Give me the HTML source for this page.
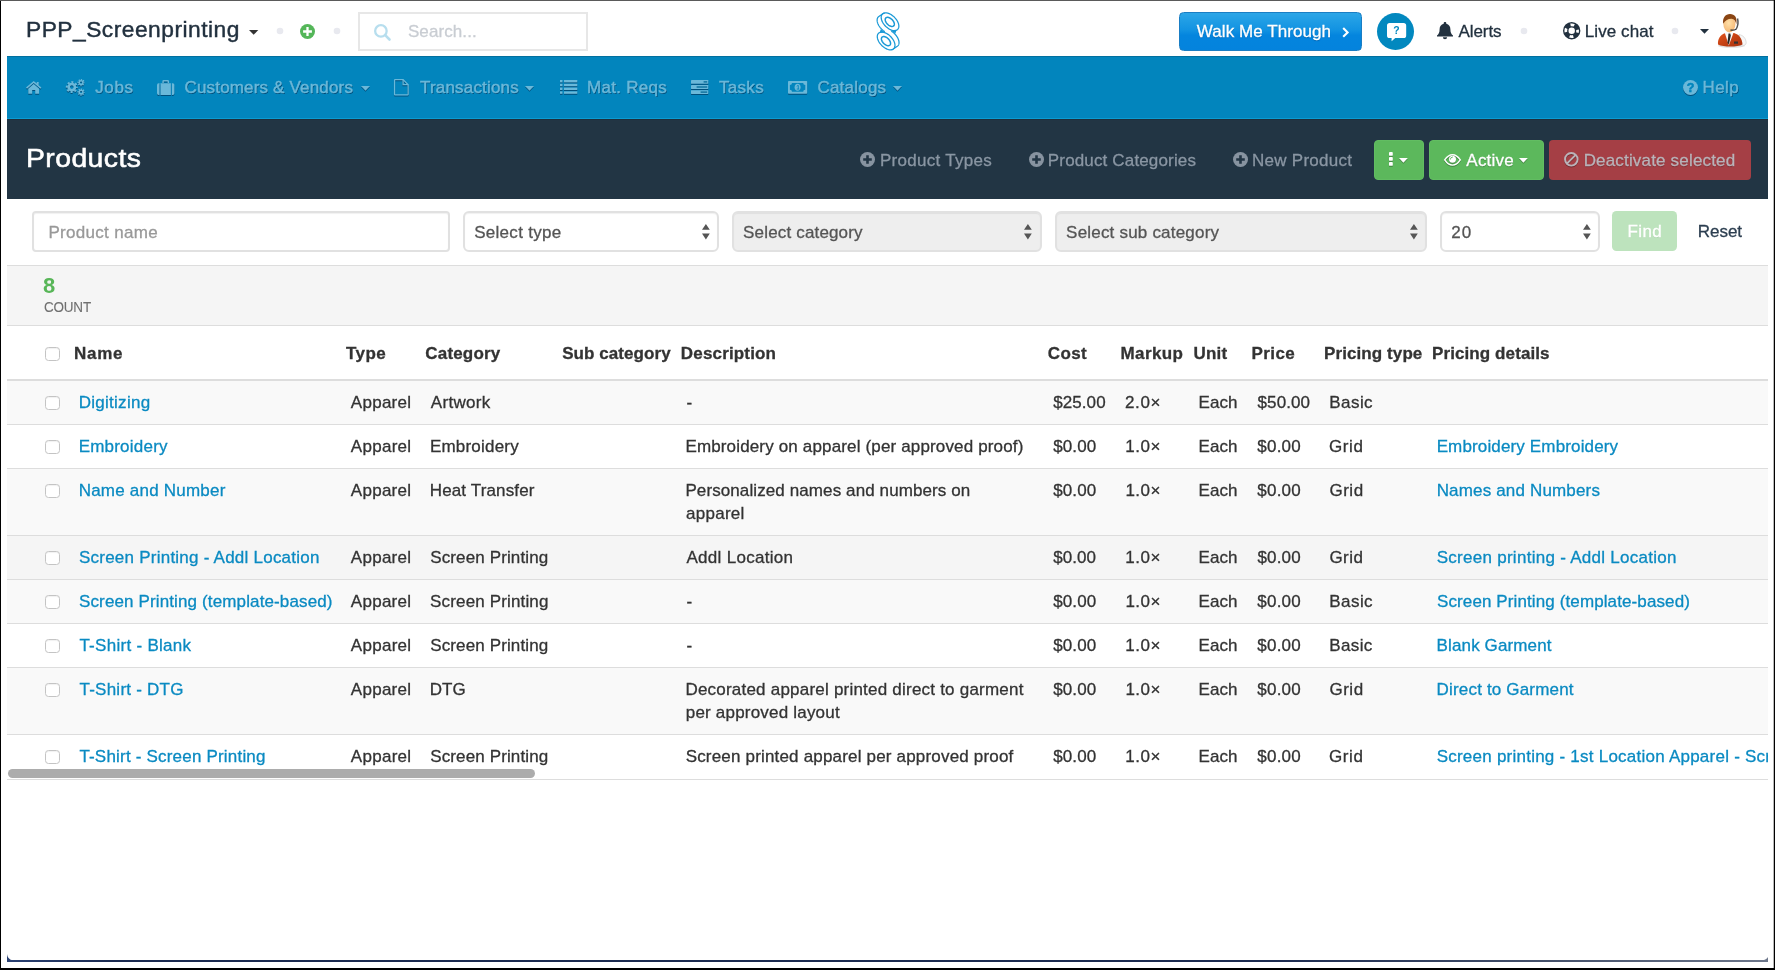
<!DOCTYPE html>
<html>
<head>
<meta charset="utf-8">
<title>Products</title>
<style>
*{box-sizing:border-box;margin:0;padding:0}
html{width:1775px;height:970px;overflow:hidden;background:#fff}
body{width:1775px;height:970px;overflow:hidden;background:#fff;opacity:.9999}
body{position:relative;font-family:"Liberation Sans",sans-serif;font-size:17px;color:#333;-webkit-text-stroke:0.3px;letter-spacing:0.09px}
.a{position:absolute;white-space:nowrap}
.t{position:absolute;white-space:nowrap;line-height:23px;height:23px}
svg{position:absolute;overflow:visible}
#bl{left:0;top:0;width:1px;height:970px;background:#000}
#bt{left:0;top:0;width:1775px;height:1px;background:#5a5a5a}
#br{left:1773px;top:0;width:2px;height:970px;background:linear-gradient(90deg,rgba(0,0,0,.28) 50%,#000 50%)}
#bb{left:0;top:968px;width:1775px;height:2px;background:#000}
#title{left:26px;top:16.2px;font-size:21.5px;line-height:28px;color:#22313f;letter-spacing:.45px;transform:scaleX(1.06);transform-origin:0 0;-webkit-text-stroke:.4px}
.dot{width:6.6px;height:6.6px;border-radius:50%;background:#e6e7ee}
#search{left:358px;top:12px;width:230px;height:39px;border:2px solid #e7e7e7;background:#fff}
#wmt{left:1179px;top:11.5px;width:182.5px;height:39.1px;border-radius:4.5px;border:1px solid #1a7ec4;background:linear-gradient(#2ca6e7,#1293e2 45%,#0485de 60%,#0483dd)}
.wm{color:#fff;text-shadow:0 1px 1px rgba(0,60,120,.45)}
#qc{left:1377.2px;top:12.8px;width:37px;height:37px;border-radius:50%;background:#0288bf}
.hd{color:#22313f}
#nav{left:7px;top:55.5px;width:1760.5px;height:63.5px;background:#0285bd;border-top:1.5px solid #02709f;border-bottom:1.5px solid #0a9bd2}
.nv{color:#6ab8d9;-webkit-text-stroke:0.45px;text-shadow:.7px 1.3px .4px rgba(0,55,95,.75)}
.ni{filter:drop-shadow(.7px 1.3px .3px rgba(0,55,95,.7))}
#bar{left:7px;top:119px;width:1760.5px;height:79.5px;background:#223544;border-top:1px solid #1e2f3c}
#ptitle{left:25.5px;top:140.7px;font-size:26.5px;line-height:34px;color:#fff;letter-spacing:.4px;transform:scaleX(1.07);transform-origin:0 0;-webkit-text-stroke:.55px}
.bl{color:#8a96a3}
.btn{border-radius:4px;height:40.6px;top:139.9px}
.gr{background:#5cb85c;border:1px solid #62bd62}
.rd{background:#a53f45}
.bt{color:#fff;text-shadow:0 1px 1px rgba(0,0,0,.3)}
.bs{filter:drop-shadow(0 1px .4px rgba(0,0,0,.3))}
#pname{left:32.2px;top:211.3px;width:417.5px;height:41px;border:2px solid #e1e1e1;border-radius:4px;background:#fff;box-shadow:inset 0 1px 1px rgba(0,0,0,.06)}
.sel{top:211.3px;height:41px;border:2px solid #e1e1e1;border-radius:6px;box-shadow:inset 0 1px 1px rgba(0,0,0,.06)}
#find{left:1612.3px;top:211.1px;width:64.6px;height:40.1px;border-radius:4.5px;background:#bde3bd}
#count{left:7px;top:265px;width:1760.5px;height:61px;background:#f5f5f5;border-top:1px solid #ddd;border-bottom:1px solid #ddd}
#tbl{left:0;top:0;width:1767.5px;height:790px;overflow:hidden}
.th{font-weight:bold;color:#333}
.lk{color:#0a8ac2}
.cb{width:14.6px;height:14.6px;border:1px solid #c4c4c4;border-radius:3.5px;background:#fff;box-shadow:inset 0 1px 1px rgba(0,0,0,.06)}
#sb{left:8px;top:768.8px;width:526.5px;height:9.4px;border-radius:5px;background:#acacac}
#foot{left:7px;top:959.5px;width:1760.5px;height:2.5px;background:linear-gradient(90deg,#2a4173,#1b2a50 6%,#1c2b50 72%,#46526c 88%,#6d778b)}
</style>
</head>
<body>
<div class="a" id="title">PPP_Screenprinting</div>
<svg style="left:248.7px;top:30px" width="9.3" height="4.8" viewBox="0 0 9.3 4.8"><path d="M0 0h9.3L4.65 4.8z" fill="#333"/></svg>
<svg style="left:275.5px;top:26.5px" width="8" height="8" viewBox="0 0 8 8"><circle cx="4" cy="4" r="3.3" fill="#e8e9ef"/></svg>
<svg style="left:300.2px;top:23.5px" width="15" height="15" viewBox="0 0 15 15"><circle cx="7.5" cy="7.5" r="7.5" fill="#54b659"/><path d="M6.350 3.100h2.300v3.250h3.250v2.300H8.650v3.250H6.350V8.650H3.100V6.350h3.250z" fill="#fff"/></svg>
<svg style="left:332.7px;top:26.5px" width="8" height="8" viewBox="0 0 8 8"><circle cx="4" cy="4" r="3.3" fill="#e8e9ef"/></svg>
<div class="a" id="search"></div>
<svg style="left:374.2px;top:23.8px" width="17" height="17" viewBox="0 0 17 17"><circle cx="6.9" cy="6.9" r="5.750" fill="none" stroke="#b7deee" stroke-width="2.300"/><path d="M11.200 11.200l4.300 4.300" stroke="#b7deee" stroke-width="2.600" stroke-linecap="round"/></svg>
<div id="x-search" class="t" style="left:407.92px;top:19.9px;letter-spacing:0.099px;color:#c9cdd3">Search...</div>
<svg id="logo" style="left:870px;top:8px" width="36" height="46" viewBox="0 0 36 46"><g fill="none" stroke="#1b9ad7" stroke-width="1.25" stroke-linejoin="round" stroke-linecap="round"><path d="M14.41 23.32 L13.97 23.02 L13.54 22.71 L13.11 22.38 L12.69 22.04 L12.28 21.68 L11.88 21.31 L11.49 20.93 L11.11 20.54 L10.74 20.13 L10.38 19.72 L10.04 19.30 L9.72 18.87 L9.41 18.43 L9.12 17.99 L8.85 17.55 L8.59 17.10 L8.35 16.66 L8.14 16.21 L7.94 15.76 L7.76 15.32 L7.61 14.87 L7.47 14.44 L7.36 14.00 L7.27 13.58 L7.20 13.16 L7.16 12.75 L7.14 12.35 L7.14 11.96 L7.16 11.58 L7.20 11.21 L7.27 10.86 L7.36 10.52 L7.47 10.20 L7.61 9.89 L7.76 9.60 L7.94 9.33 L8.14 9.08 L8.35 8.84 L8.59 8.63 L8.85 8.44 L12.88 5.68 L13.21 5.48 L13.57 5.30 L13.95 5.16 L14.36 5.04"/><path d="M21.74 23.41 L22.18 23.71 L22.61 24.02 L23.04 24.34 L23.46 24.69 L23.87 25.04 L24.27 25.41 L24.66 25.80 L25.04 26.19 L25.41 26.59 L25.76 27.01 L26.10 27.43 L26.43 27.86 L26.74 28.29 L27.03 28.73 L27.30 29.18 L27.56 29.62 L27.79 30.07 L28.01 30.52 L28.21 30.97 L28.39 31.41 L28.54 31.85 L28.67 32.29 L28.79 32.72 L28.88 33.15 L28.94 33.57 L28.99 33.98 L29.01 34.38 L29.01 34.77 L28.99 35.15 L28.94 35.52 L28.88 35.87 L28.79 36.20 L28.67 36.53 L28.54 36.83 L28.38 37.12 L28.21 37.39 L28.01 37.65 L27.79 37.88 L27.56 38.10 L27.30 38.29 L23.27 41.04 L22.94 41.25 L22.58 41.43 L22.20 41.57 L21.79 41.68"/><path d="M27.67 21.41 L26.87 22.01 L25.91 22.41 L24.81 22.60 L23.58 22.57 L22.27 22.32 L20.91 21.86 L19.52 21.20 L18.14 20.36 L16.81 19.36 L15.56 18.22 L14.42 16.97 L13.41 15.64 L12.57 14.26 L11.91 12.87 L11.46 11.50 L11.21 10.19 L11.18 8.97 L11.37 7.86 L11.77 6.90 L12.37 6.11 L13.16 5.51 L14.12 5.10 L15.23 4.92 L16.45 4.95 L17.77 5.19 L19.13 5.65 L20.52 6.31 L21.90 7.15 L23.23 8.15 L24.48 9.30 L25.62 10.55 L26.63 11.88 L27.47 13.25 L28.12 14.64 L28.58 16.01 L28.83 17.32 L28.86 18.55 L28.67 19.65 L28.27 20.61 L27.67 21.41Z"/><path d="M23.78 40.62 L22.98 41.22 L22.02 41.62 L20.92 41.81 L19.69 41.78 L18.38 41.53 L17.02 41.07 L15.63 40.42 L14.25 39.58 L12.92 38.57 L11.67 37.43 L10.53 36.18 L9.52 34.85 L8.68 33.47 L8.02 32.08 L7.57 30.72 L7.32 29.40 L7.29 28.18 L7.48 27.07 L7.88 26.11 L8.48 25.32 L9.27 24.72 L10.23 24.32 L11.34 24.13 L12.56 24.16 L13.88 24.41 L15.24 24.86 L16.63 25.52 L18.01 26.36 L19.34 27.37 L20.59 28.51 L21.73 29.76 L22.74 31.09 L23.58 32.47 L24.23 33.86 L24.69 35.22 L24.94 36.53 L24.97 37.76 L24.78 38.86 L24.38 39.83 L23.78 40.62Z"/><path stroke-width="1.5" d="M23.74 17.86 L23.33 18.17 L22.84 18.37 L22.27 18.46 L21.64 18.44 L20.97 18.31 L20.26 18.07 L19.55 17.73 L18.84 17.29 L18.15 16.77 L17.50 16.18 L16.91 15.53 L16.39 14.85 L15.95 14.13 L15.61 13.42 L15.37 12.71 L15.24 12.04 L15.22 11.41 L15.31 10.84 L15.52 10.35 L15.82 9.94 L16.23 9.63 L16.72 9.43 L17.29 9.34 L17.92 9.36 L18.60 9.49 L19.30 9.73 L20.02 10.07 L20.73 10.51 L21.42 11.03 L22.06 11.62 L22.65 12.27 L23.17 12.95 L23.61 13.66 L23.95 14.38 L24.19 15.09 L24.32 15.76 L24.34 16.39 L24.25 16.96 L24.05 17.45 L23.74 17.86Z"/><path stroke-width="1.5" d="M19.94 37.07 L19.54 37.38 L19.05 37.58 L18.48 37.67 L17.85 37.65 L17.17 37.52 L16.47 37.28 L15.75 36.94 L15.04 36.50 L14.35 35.98 L13.71 35.39 L13.11 34.75 L12.59 34.06 L12.16 33.35 L11.81 32.63 L11.57 31.93 L11.44 31.25 L11.42 30.62 L11.52 30.05 L11.72 29.56 L12.03 29.15 L12.43 28.85 L12.93 28.64 L13.50 28.55 L14.13 28.57 L14.80 28.70 L15.51 28.94 L16.22 29.28 L16.93 29.72 L17.62 30.24 L18.27 30.83 L18.86 31.48 L19.38 32.17 L19.82 32.88 L20.16 33.59 L20.40 34.30 L20.53 34.97 L20.55 35.60 L20.46 36.17 L20.25 36.66 L19.94 37.07Z"/></g><path d="M10.72 21.25 L15.28 24.29 L12.43 24.76 L9.49 24.95Z" fill="#1b9ad7"/><path d="M25.43 25.47 L20.87 22.44 L23.72 21.96 L26.66 21.77Z" fill="#1b9ad7"/></svg>
<div class="a" id="wmt"></div><div id="x-wmt" class="t wm" style="left:1196.83px;top:20.0px;letter-spacing:0.063px;">Walk Me Through</div>
<svg style="left:1341.5px;top:27px" width="7" height="11" viewBox="0 0 7 11"><path d="M1.2 1l4.400 4.400L1.200 9.800" fill="none" stroke="#fff" stroke-width="2.100"/></svg>
<div class="a" id="qc"></div>
<svg style="left:1387px;top:22.8px" width="19.2" height="18.5" viewBox="0 0 19.2 18.5"><path d="M2.600 0h14a2.600 2.600 0 0 1 2.600 2.600v9.800a2.600 2.600 0 0 1-2.600 2.600H8.300L4.600 18.200V15H2.600a2.600 2.600 0 0 1-2.600-2.600V2.600a2.600 2.600 0 0 1 2.600-2.600z" fill="#fff"/><text x="9.500" y="11.400" font-family="Liberation Sans" font-weight="bold" font-size="10.500" text-anchor="middle" fill="#0288bf" stroke="none">?</text></svg>
<svg style="left:1436.6px;top:22.3px" width="16" height="17.5" viewBox="0 0 16 17.5"><path d="M8 0c.75 0 1.300.55 1.300 1.250v.5c2.600.6 4.100 2.800 4.100 5.450 0 3.300.9 4.900 2.600 6.200v1H0v-1c1.700-1.300 2.600-2.900 2.600-6.200 0-2.650 1.500-4.850 4.100-5.450v-.5C6.700.55 7.250 0 8 0zM5.900 15.200h4.200a2.100 2.100 0 0 1-4.200 0z" fill="#22313f"/></svg>
<div id="x-alerts" class="t hd" style="left:1458.40px;top:19.7px;letter-spacing:-0.050px;">Alerts</div>
<svg style="left:1519.7px;top:26.5px" width="8" height="8" viewBox="0 0 8 8"><circle cx="4" cy="4" r="3.3" fill="#e8e9ef"/></svg>
<svg style="left:1562.6px;top:22.2px" width="17.4" height="17.4" viewBox="0 0 17.4 17.4"><circle cx="8.7" cy="8.7" r="5.950" fill="none" stroke="#22313f" stroke-width="5.500"/><circle cx="8.700" cy="8.700" r="5.900" fill="none" stroke="#fff" stroke-width="2.700" stroke-dasharray="3.900 5.368" stroke-dashoffset="1.950"/></svg>
<div id="x-live" class="t hd" style="left:1584.84px;top:19.7px;letter-spacing:0.069px;">Live chat</div>
<svg style="left:1671.2px;top:26.5px" width="8" height="8" viewBox="0 0 8 8"><circle cx="4" cy="4" r="3.3" fill="#e8e9ef"/></svg>
<svg style="left:1699.6px;top:28.8px" width="9" height="4.8" viewBox="0 0 9 4.8"><path d="M0 0h9L4.5 4.8z" fill="#22313f"/></svg>
<svg id="avatar" style="left:1717px;top:13.5px" width="30" height="34" viewBox="0 0 30 34">
<defs><linearGradient id="vg" x1="0" y1="0" x2="1" y2="1"><stop offset="0" stop-color="#e2531c"/><stop offset="1" stop-color="#a8300c"/></linearGradient>
<radialGradient id="fg" cx=".45" cy=".4" r=".7"><stop offset="0" stop-color="#ffe0a8"/><stop offset="1" stop-color="#f3b26e"/></radialGradient></defs>
<ellipse cx="14.5" cy="31.8" rx="13.5" ry="2" fill="#000" opacity=".13"/>
<path d="M22 20.500c4 .8 6.900 3.400 7.200 8.400.1 1.800-2.200 2.900-5 3.100z" fill="#f7f7f7" stroke="#c9c9c9" stroke-width=".6"/>
<path d="M1 30.500c-.5-5.500 2-9.500 7.500-11.500h8.500c5 1.500 8 5 8.500 11.500-3 1.500-7 2-12 2s-9.500-.5-12.500-2z" fill="url(#vg)"/>
<path d="M7.900 19l4.100-2.200 4.400 2.200-4.600 12.400z" fill="#fafafa"/>
<path d="M11.500 19.500h1.800l.5 2.300-2 9-1.300-2.300z" fill="#2a2a2a"/>
<rect x="17" y="27.500" width="4" height="2.200" fill="#333"/>
<ellipse cx="12.400" cy="10.600" rx="6" ry="7.800" fill="url(#fg)"/>
<path d="M6.200 9.800C5.300 4 8.300 0 13 0c4.800 0 7.400 3.400 6.300 10.500-.6-3.300-2-5.600-4.700-5.700-3.400-.1-6.200 1.300-8.400 5z" fill="#8a4513"/>
<path d="M20.500 4.500c1 3.500.2 8-1.500 11" fill="none" stroke="#555" stroke-width="1.500"/>
<path d="M19 15.200c-1.500 1-3.500 1.200-5.500.8" fill="none" stroke="#333" stroke-width="1.300"/>
</svg>
<div class="a" id="nav"></div>
<svg class="ni" style="left:26px;top:81.2px" width="15.4" height="12.8" viewBox="0 0 15.4 12.8"><path d="M7.7 0L0 6.500l1 1.150L7.700 2l6.700 5.650 1-1.150L12.700 4.200V.9h-1.900v1.700z" fill="#6ab8d9"/><path d="M7.700 3.100L2.300 7.650V12.800h3.900V9h3v3.800h3.900V7.650z" fill="#6ab8d9"/></svg>
<svg class="ni" style="left:66px;top:79px" width="18.6" height="17.2" viewBox="0 0 18.6 17.2"><circle cx="5.8" cy="8.1" r="3.12" fill="none" stroke="#6ab8d9" stroke-width="2.65"/><circle cx="5.8" cy="8.1" r="5.00" fill="none" stroke="#6ab8d9" stroke-width="2.00" stroke-dasharray="2.041 1.884" stroke-dashoffset="1.021"/><circle cx="15.1" cy="3.6" r="1.88" fill="none" stroke="#6ab8d9" stroke-width="1.56"/><circle cx="15.1" cy="3.6" r="2.93" fill="none" stroke="#6ab8d9" stroke-width="1.44" stroke-dasharray="1.197 1.105" stroke-dashoffset="0.598"/><circle cx="15.1" cy="13.1" r="1.88" fill="none" stroke="#6ab8d9" stroke-width="1.56"/><circle cx="15.1" cy="13.1" r="2.93" fill="none" stroke="#6ab8d9" stroke-width="1.44" stroke-dasharray="1.197 1.105" stroke-dashoffset="0.598"/></svg>
<div id="x-jobs" class="t nv" style="left:95.23px;top:76.3px;letter-spacing:0.647px;">Jobs</div>
<svg class="ni" style="left:157.1px;top:80.1px" width="17.4" height="14.9" viewBox="0 0 17.4 14.9"><path d="M5.300 3.300V1.500A1.500 1.500 0 0 1 6.800 0h3.800a1.500 1.500 0 0 1 1.500 1.500v1.800h-1.500V1.500H6.800v1.800z" fill="#6ab8d9"/><path d="M0 4.900a1.600 1.600 0 0 1 1.600-1.600h.9v11.600h-.9A1.600 1.600 0 0 1 0 13.300zM3.500 3.300h10.400v11.600H3.500zM14.900 3.300h.9a1.600 1.600 0 0 1 1.600 1.600v8.400a1.600 1.600 0 0 1-1.600 1.600h-.9z" fill="#6ab8d9"/></svg>
<div id="x-cust" class="t nv" style="left:184.52px;top:76.3px;letter-spacing:0.170px;">Customers &amp; Vendors</div>
<svg class="ni" style="left:360.5px;top:86.2px" width="9" height="4.7" viewBox="0 0 9 4.7"><path d="M0 0h9L4.5 4.7z" fill="#6ab8d9"/></svg>
<svg class="ni" style="left:394.2px;top:79.4px" width="14.8" height="16.5" viewBox="0 0 14.8 16.5"><path d="M1.100.65h8l5.050 5.050v9.600a.55.55 0 0 1-.55.550H1.100a.55.55 0 0 1-.55-.550V1.200A.55.55 0 0 1 1.100.65z" fill="none" stroke="#6ab8d9" stroke-width="1.250"/><path d="M9.100.65v5.050h5.050" fill="none" stroke="#6ab8d9" stroke-width="1.250"/></svg>
<div id="x-trans" class="t nv" style="left:420.06px;top:76.3px;letter-spacing:0.176px;">Transactions</div>
<svg class="ni" style="left:525.2px;top:86.2px" width="9" height="4.7" viewBox="0 0 9 4.7"><path d="M0 0h9L4.5 4.7z" fill="#6ab8d9"/></svg>
<svg class="ni" style="left:559.6px;top:80.1px" width="17.3" height="13.8" viewBox="0 0 17.3 13.8"><rect x="0" y="0.00" width="2.5" height="2.4" fill="#6ab8d9"/><rect x="3.9" y="0.00" width="13.4" height="2.4" fill="#6ab8d9"/><rect x="0" y="3.80" width="2.5" height="2.4" fill="#6ab8d9"/><rect x="3.9" y="3.80" width="13.4" height="2.4" fill="#6ab8d9"/><rect x="0" y="7.60" width="2.5" height="2.4" fill="#6ab8d9"/><rect x="3.9" y="7.60" width="13.4" height="2.4" fill="#6ab8d9"/><rect x="0" y="11.40" width="2.5" height="2.4" fill="#6ab8d9"/><rect x="3.9" y="11.40" width="13.4" height="2.4" fill="#6ab8d9"/></svg>
<div id="x-mat" class="t nv" style="left:587.12px;top:76.3px;letter-spacing:0.269px;">Mat. Reqs</div>
<svg class="ni" style="left:690.8px;top:80.1px" width="17.3" height="14" viewBox="0 0 17.3 14"><rect x="0" y="0.00" width="17.3" height="3.8" rx=".4" fill="#6ab8d9"/><rect x="12.6" y="1.20" width="3.6" height="1.4" fill="#0b6f9c"/><rect x="0" y="5.10" width="17.3" height="3.8" rx=".4" fill="#6ab8d9"/><rect x="5.6" y="6.30" width="10.6" height="1.4" fill="#0b6f9c"/><rect x="0" y="10.20" width="17.3" height="3.8" rx=".4" fill="#6ab8d9"/><rect x="9.6" y="11.40" width="6.6" height="1.4" fill="#0b6f9c"/></svg>
<div id="x-tasks" class="t nv" style="left:719.10px;top:76.3px;letter-spacing:0.271px;">Tasks</div>
<svg class="ni" style="left:788.2px;top:81.4px" width="19.2" height="12.7" viewBox="0 0 19.2 12.7"><rect width="19.2" height="12.7" rx=".7" fill="#6ab8d9"/><path d="M4 1.9H15.2A2.100 2.100 0 0 0 17.300 4V8.700A2.100 2.100 0 0 0 15.200 10.800H4A2.100 2.100 0 0 0 1.900 8.700V4A2.100 2.100 0 0 0 4 1.900Z" fill="#0285bd"/><ellipse cx="9.6" cy="6.35" rx="3" ry="3.5" fill="#6ab8d9"/><path d="M8.800 5.300l1-.8h.5v3.500M8.800 8.100h2.400" stroke="#0285bd" stroke-width=".9" fill="none"/></svg>
<div id="x-cat" class="t nv" style="left:817.40px;top:76.3px;letter-spacing:0.234px;">Catalogs</div>
<svg class="ni" style="left:893.2px;top:86.2px" width="9" height="4.7" viewBox="0 0 9 4.7"><path d="M0 0h9L4.5 4.7z" fill="#6ab8d9"/></svg>
<svg class="ni" style="left:1683.3px;top:80px" width="15" height="15" viewBox="0 0 15 15"><circle cx="7.5" cy="7.5" r="7.5" fill="#6ab8d9"/><text x="7.5" y="12" font-family="Liberation Sans" font-weight="bold" font-size="12.5" text-anchor="middle" fill="#0285bd" stroke="#0285bd" stroke-width=".5">?</text></svg>
<div id="x-help" class="t nv" style="left:1702.43px;top:76.3px;letter-spacing:0.451px;">Help</div>
<div class="a" id="bar"></div>
<div class="a" id="ptitle">Products</div>
<svg style="left:860.4px;top:152.1px" width="15" height="15" viewBox="0 0 15 15"><circle cx="7.5" cy="7.5" r="7.5" fill="#8793a0"/><path d="M6.200 3.200h2.600v3h3v2.600h-3v3H6.200v-3h-3V6.200h3z" fill="#223544"/></svg>
<div id="x-ptypes" class="t bl" style="left:879.88px;top:148.5px;letter-spacing:0.297px;">Product Types</div>
<svg style="left:1028.5px;top:152.1px" width="15" height="15" viewBox="0 0 15 15"><circle cx="7.5" cy="7.5" r="7.5" fill="#8793a0"/><path d="M6.200 3.200h2.600v3h3v2.600h-3v3H6.200v-3h-3V6.200h3z" fill="#223544"/></svg>
<div id="x-pcats" class="t bl" style="left:1047.83px;top:148.5px;letter-spacing:0.151px;">Product Categories</div>
<svg style="left:1233px;top:152.1px" width="15" height="15" viewBox="0 0 15 15"><circle cx="7.5" cy="7.5" r="7.5" fill="#8793a0"/><path d="M6.200 3.200h2.600v3h3v2.600h-3v3H6.200v-3h-3V6.200h3z" fill="#223544"/></svg>
<div id="x-newp" class="t bl" style="left:1252.05px;top:148.5px;letter-spacing:0.264px;">New Product</div>
<div class="a btn gr" style="left:1374.1px;width:49.7px"></div>
<div class="a btn gr" style="left:1428.9px;width:114.7px"></div>
<div class="a btn rd" style="left:1549px;width:201.5px"></div>
<svg class="bs" style="left:1389.3px;top:152.3px" width="3.8" height="13.8" viewBox="0 0 3.8 13.8"><rect width="3.8" height="3.8" rx=".9" fill="#fff"/><rect y="5" width="3.8" height="3.8" rx=".9" fill="#fff"/><rect y="10" width="3.8" height="3.8" rx=".9" fill="#fff"/></svg>
<svg class="bs" style="left:1398.9px;top:158.1px" width="8.8" height="4.8" viewBox="0 0 8.8 4.8"><path d="M0 0h8.8L4.4 4.8z" fill="#fff"/></svg>
<svg class="bs" style="left:1444.2px;top:154.2px" width="17" height="11.8" viewBox="0 0 17 11.8"><path d="M.7 5.900C3.100 2.300 5.700.7 8.500.7s5.400 1.600 7.800 5.200c-2.400 3.600-5 5.200-7.800 5.200S3.100 9.500.7 5.900z" fill="none" stroke="#fff" stroke-width="1.400"/><circle cx="8.500" cy="5.300" r="3.500" fill="#fff"/><path d="M6.300 5.200a2.300 2.300 0 0 1 2.200-2.200" fill="none" stroke="#5cb85c" stroke-width=".9" stroke-linecap="round"/></svg>
<div id="x-active" class="t bt" style="left:1466.34px;top:148.5px;letter-spacing:0.211px;">Active</div>
<svg class="bs" style="left:1518.6px;top:158.1px" width="8.8" height="4.8" viewBox="0 0 8.8 4.8"><path d="M0 0h8.8L4.4 4.8z" fill="#fff"/></svg>
<svg class="bs" style="left:1564.4px;top:152.2px" width="14.6" height="14.6" viewBox="0 0 14.6 14.6"><circle cx="7.3" cy="7.3" r="6.3" fill="none" stroke="#bab3b9" stroke-width="1.9"/><path d="M2.900 11.700l8.800-8.800" stroke="#bab3b9" stroke-width="1.900"/></svg>
<div id="x-deact" class="t bt" style="left:1583.63px;top:148.5px;letter-spacing:0.177px;color:#bab3b9">Deactivate selected</div>
<div class="a" id="pname"></div><div id="x-pname" class="t" style="left:48.39px;top:220.5px;letter-spacing:0.311px;color:#999">Product name</div>
<div class="a sel" style="left:462.7px;width:256.2px;background:#fff"></div><div id="x-stype" class="t" style="left:474.19px;top:220.5px;letter-spacing:0.289px;color:#555">Select type</div><svg style="left:701.7px;top:224.2px" width="7.8" height="15.4" viewBox="0 0 7.8 15.4"><path d="M0 5.800L3.900 0l3.900 5.800zM0 9.400h7.800L3.900 15.400z" fill="#555"/></svg>
<div class="a sel" style="left:731.8px;width:309.8px;background:#eee"></div><div id="x-scat" class="t" style="left:743.10px;top:220.5px;letter-spacing:0.164px;color:#555">Select category</div><svg style="left:1024.4px;top:224.2px" width="7.8" height="15.4" viewBox="0 0 7.8 15.4"><path d="M0 5.800L3.900 0l3.900 5.800zM0 9.400h7.800L3.900 15.400z" fill="#555"/></svg>
<div class="a sel" style="left:1054.6px;width:372.7px;background:#eee"></div><div id="x-ssub" class="t" style="left:1066.10px;top:220.5px;letter-spacing:0.200px;color:#555">Select sub category</div><svg style="left:1410.1px;top:224.2px" width="7.8" height="15.4" viewBox="0 0 7.8 15.4"><path d="M0 5.800L3.900 0l3.900 5.800zM0 9.400h7.800L3.900 15.400z" fill="#555"/></svg>
<div class="a sel" style="left:1439.7px;width:160.2px;background:#fff"></div><div id="x-s20" class="t" style="left:1451.18px;top:220.5px;letter-spacing:1.055px;color:#555">20</div><svg style="left:1582.7px;top:224.2px" width="7.8" height="15.4" viewBox="0 0 7.8 15.4"><path d="M0 5.800L3.900 0l3.900 5.800zM0 9.400h7.800L3.900 15.400z" fill="#555"/></svg>
<div class="a" id="find"></div><div id="x-find" class="t" style="left:1627.39px;top:220.1px;letter-spacing:0.459px;color:#fff;text-shadow:0 1px 0 rgba(0,0,0,.06)">Find</div>
<div id="x-reset" class="t" style="left:1697.71px;top:219.8px;letter-spacing:-0.011px;color:#2c3e50">Reset</div>
<div class="a" id="count"></div><div id="x-c8" class="t" style="left:42.96px;top:274.1px;color:#58b658;font-weight:bold;font-size:22px;-webkit-text-stroke:0">8</div><div id="x-count" class="t" style="left:44.11px;top:296.4px;letter-spacing:-0.215px;color:#707070;font-size:14.5px;-webkit-text-stroke:0.1px;transform:scaleX(.93);transform-origin:0 0">COUNT</div>
<div class="a" id="tbl">
<div class="a" style="left:7px;top:379px;width:1760.5px;height:2px;background:#ddd"></div>
<div class="a cb" style="left:45.2px;top:346.8px"></div>
<div class="a" style="left:7px;top:381px;width:1760.5px;height:43px;background:#f9f9f9"></div>
<div class="a" style="left:7px;top:424px;width:1760.5px;height:1px;background:#ddd"></div>
<div class="a cb" style="left:45.2px;top:395.8px"></div>
<div class="a" style="left:7px;top:425px;width:1760.5px;height:43px;background:#fff"></div>
<div class="a" style="left:7px;top:468px;width:1760.5px;height:1px;background:#ddd"></div>
<div class="a cb" style="left:45.2px;top:439.8px"></div>
<div class="a" style="left:7px;top:469px;width:1760.5px;height:66px;background:#f9f9f9"></div>
<div class="a" style="left:7px;top:535px;width:1760.5px;height:1px;background:#ddd"></div>
<div class="a cb" style="left:45.2px;top:483.8px"></div>
<div class="a" style="left:7px;top:536px;width:1760.5px;height:43px;background:#f5f5f5"></div>
<div class="a" style="left:7px;top:579px;width:1760.5px;height:1px;background:#ddd"></div>
<div class="a cb" style="left:45.2px;top:550.8px"></div>
<div class="a" style="left:7px;top:580px;width:1760.5px;height:43px;background:#f9f9f9"></div>
<div class="a" style="left:7px;top:623px;width:1760.5px;height:1px;background:#ddd"></div>
<div class="a cb" style="left:45.2px;top:594.8px"></div>
<div class="a" style="left:7px;top:624px;width:1760.5px;height:43px;background:#fff"></div>
<div class="a" style="left:7px;top:667px;width:1760.5px;height:1px;background:#ddd"></div>
<div class="a cb" style="left:45.2px;top:638.8px"></div>
<div class="a" style="left:7px;top:668px;width:1760.5px;height:66px;background:#f9f9f9"></div>
<div class="a" style="left:7px;top:734px;width:1760.5px;height:1px;background:#ddd"></div>
<div class="a cb" style="left:45.2px;top:682.8px"></div>
<div class="a" style="left:7px;top:735px;width:1760.5px;height:44px;background:#fff"></div>
<div class="a" style="left:7px;top:779px;width:1760.5px;height:1px;background:#ddd"></div>
<div class="a cb" style="left:45.2px;top:749.8px"></div>
<div id="x-hname" class="t th" style="left:73.89px;top:342.0px;letter-spacing:0.799px;">Name</div>
<div id="x-htype" class="t th" style="left:346.08px;top:342.0px;letter-spacing:0.368px;">Type</div>
<div id="x-hcat" class="t th" style="left:425.37px;top:342.0px;letter-spacing:0.164px;">Category</div>
<div id="x-hsub" class="t th" style="left:562.16px;top:342.0px;letter-spacing:0.068px;">Sub category</div>
<div id="x-hdesc" class="t th" style="left:680.87px;top:342.0px;letter-spacing:0.158px;">Description</div>
<div id="x-hcost" class="t th" style="left:1047.80px;top:342.0px;letter-spacing:0.403px;">Cost</div>
<div id="x-hmark" class="t th" style="left:1120.50px;top:342.0px;letter-spacing:0.395px;">Markup</div>
<div id="x-hunit" class="t th" style="left:1193.38px;top:342.0px;letter-spacing:0.242px;">Unit</div>
<div id="x-hprice" class="t th" style="left:1251.57px;top:342.0px;letter-spacing:0.417px;">Price</div>
<div id="x-hpt" class="t th" style="left:1324.09px;top:342.0px;letter-spacing:0.085px;">Pricing type</div>
<div id="x-hpd" class="t th" style="left:1431.99px;top:342.0px;letter-spacing:0.097px;">Pricing details</div>
<div id="x-n0" class="t lk" style="left:78.63px;top:390.6px;letter-spacing:0.285px;">Digitizing</div>
<div id="x-a0" class="t" style="left:350.84px;top:390.6px;letter-spacing:0.272px;">Apparel</div>
<div id="x-c0" class="t" style="left:430.86px;top:390.6px;letter-spacing:0.290px;">Artwork</div>
<div id="x-d0_0" class="t" style="left:686.38px;top:390.6px;">-</div>
<div id="x-co0" class="t" style="left:1053.25px;top:390.6px;letter-spacing:0.067px;">$25.00</div>
<div id="x-m0" class="t" style="left:1125.05px;top:390.6px;letter-spacing:0.584px;">2.0×</div>
<div id="x-u0" class="t" style="left:1198.56px;top:390.6px;letter-spacing:0.037px;">Each</div>
<div id="x-p0" class="t" style="left:1257.53px;top:390.6px;letter-spacing:0.107px;">$50.00</div>
<div id="x-pt0" class="t" style="left:1329.27px;top:390.6px;letter-spacing:0.447px;">Basic</div>
<div id="x-n1" class="t lk" style="left:78.64px;top:434.6px;letter-spacing:0.218px;">Embroidery</div>
<div id="x-a1" class="t" style="left:350.84px;top:434.6px;letter-spacing:0.277px;">Apparel</div>
<div id="x-c1" class="t" style="left:429.95px;top:434.6px;letter-spacing:0.202px;">Embroidery</div>
<div id="x-d1_0" class="t" style="left:685.40px;top:434.6px;letter-spacing:0.153px;">Embroidery on apparel (per approved proof)</div>
<div id="x-co1" class="t" style="left:1053.25px;top:434.6px;letter-spacing:0.088px;">$0.00</div>
<div id="x-m1" class="t" style="left:1125.34px;top:434.6px;letter-spacing:0.509px;">1.0×</div>
<div id="x-u1" class="t" style="left:1198.55px;top:434.6px;letter-spacing:0.043px;">Each</div>
<div id="x-p1" class="t" style="left:1257.36px;top:434.6px;letter-spacing:0.208px;">$0.00</div>
<div id="x-pt1" class="t" style="left:1329.04px;top:434.6px;letter-spacing:0.569px;">Grid</div>
<div id="x-pd1" class="t lk" style="left:1436.64px;top:434.6px;letter-spacing:0.144px;">Embroidery Embroidery</div>
<div id="x-n2" class="t lk" style="left:78.65px;top:478.6px;letter-spacing:0.219px;">Name and Number</div>
<div id="x-a2" class="t" style="left:350.84px;top:478.6px;letter-spacing:0.272px;">Apparel</div>
<div id="x-c2" class="t" style="left:429.76px;top:478.6px;letter-spacing:0.139px;">Heat Transfer</div>
<div id="x-d2_0" class="t" style="left:685.39px;top:478.6px;letter-spacing:0.104px;">Personalized names and numbers on</div>
<div id="x-d2_1" class="t" style="left:686.10px;top:501.6px;letter-spacing:0.248px;">apparel</div>
<div id="x-co2" class="t" style="left:1053.24px;top:478.6px;letter-spacing:0.090px;">$0.00</div>
<div id="x-m2" class="t" style="left:1125.40px;top:478.6px;letter-spacing:0.483px;">1.0×</div>
<div id="x-u2" class="t" style="left:1198.56px;top:478.6px;letter-spacing:0.037px;">Each</div>
<div id="x-p2" class="t" style="left:1257.36px;top:478.6px;letter-spacing:0.190px;">$0.00</div>
<div id="x-pt2" class="t" style="left:1329.42px;top:478.6px;letter-spacing:0.520px;">Grid</div>
<div id="x-pd2" class="t lk" style="left:1436.66px;top:478.6px;letter-spacing:0.164px;">Names and Numbers</div>
<div id="x-n3" class="t lk" style="left:78.99px;top:545.6px;letter-spacing:0.234px;">Screen Printing - Addl Location</div>
<div id="x-a3" class="t" style="left:350.86px;top:545.6px;letter-spacing:0.263px;">Apparel</div>
<div id="x-c3" class="t" style="left:430.22px;top:545.6px;letter-spacing:0.129px;">Screen Printing</div>
<div id="x-d3_0" class="t" style="left:686.47px;top:545.6px;letter-spacing:0.298px;">Addl Location</div>
<div id="x-co3" class="t" style="left:1053.25px;top:545.6px;letter-spacing:0.059px;">$0.00</div>
<div id="x-m3" class="t" style="left:1125.29px;top:545.6px;letter-spacing:0.490px;">1.0×</div>
<div id="x-u3" class="t" style="left:1198.56px;top:545.6px;letter-spacing:0.056px;">Each</div>
<div id="x-p3" class="t" style="left:1257.38px;top:545.6px;letter-spacing:0.185px;">$0.00</div>
<div id="x-pt3" class="t" style="left:1329.44px;top:545.6px;letter-spacing:0.436px;">Grid</div>
<div id="x-pd3" class="t lk" style="left:1436.67px;top:545.6px;letter-spacing:0.277px;">Screen printing - Addl Location</div>
<div id="x-n4" class="t lk" style="left:78.99px;top:589.6px;letter-spacing:0.131px;">Screen Printing (template-based)</div>
<div id="x-a4" class="t" style="left:350.84px;top:589.6px;letter-spacing:0.272px;">Apparel</div>
<div id="x-c4" class="t" style="left:430.08px;top:589.6px;letter-spacing:0.149px;">Screen Printing</div>
<div id="x-d4_0" class="t" style="left:686.38px;top:589.6px;">-</div>
<div id="x-co4" class="t" style="left:1053.24px;top:589.6px;letter-spacing:0.090px;">$0.00</div>
<div id="x-m4" class="t" style="left:1125.40px;top:589.6px;letter-spacing:0.483px;">1.0×</div>
<div id="x-u4" class="t" style="left:1198.56px;top:589.6px;letter-spacing:0.037px;">Each</div>
<div id="x-p4" class="t" style="left:1257.36px;top:589.6px;letter-spacing:0.190px;">$0.00</div>
<div id="x-pt4" class="t" style="left:1329.27px;top:589.6px;letter-spacing:0.447px;">Basic</div>
<div id="x-pd4" class="t lk" style="left:1436.99px;top:589.6px;letter-spacing:0.111px;">Screen Printing (template-based)</div>
<div id="x-n5" class="t lk" style="left:79.38px;top:633.6px;letter-spacing:0.287px;">T-Shirt - Blank</div>
<div id="x-a5" class="t" style="left:350.84px;top:633.6px;letter-spacing:0.277px;">Apparel</div>
<div id="x-c5" class="t" style="left:430.22px;top:633.6px;letter-spacing:0.129px;">Screen Printing</div>
<div id="x-d5_0" class="t" style="left:686.38px;top:633.6px;">-</div>
<div id="x-co5" class="t" style="left:1053.25px;top:633.6px;letter-spacing:0.088px;">$0.00</div>
<div id="x-m5" class="t" style="left:1125.34px;top:633.6px;letter-spacing:0.509px;">1.0×</div>
<div id="x-u5" class="t" style="left:1198.55px;top:633.6px;letter-spacing:0.043px;">Each</div>
<div id="x-p5" class="t" style="left:1257.36px;top:633.6px;letter-spacing:0.208px;">$0.00</div>
<div id="x-pt5" class="t" style="left:1329.28px;top:633.6px;letter-spacing:0.370px;">Basic</div>
<div id="x-pd5" class="t lk" style="left:1436.62px;top:633.6px;letter-spacing:0.125px;">Blank Garment</div>
<div id="x-n6" class="t lk" style="left:79.54px;top:677.6px;letter-spacing:0.234px;">T-Shirt - DTG</div>
<div id="x-a6" class="t" style="left:350.84px;top:677.6px;letter-spacing:0.272px;">Apparel</div>
<div id="x-c6" class="t" style="left:429.72px;top:677.6px;">DTG</div>
<div id="x-d6_0" class="t" style="left:685.41px;top:677.6px;letter-spacing:0.217px;">Decorated apparel printed direct to garment</div>
<div id="x-d6_1" class="t" style="left:685.76px;top:700.6px;letter-spacing:0.201px;">per approved layout</div>
<div id="x-co6" class="t" style="left:1053.24px;top:677.6px;letter-spacing:0.090px;">$0.00</div>
<div id="x-m6" class="t" style="left:1125.40px;top:677.6px;letter-spacing:0.483px;">1.0×</div>
<div id="x-u6" class="t" style="left:1198.56px;top:677.6px;letter-spacing:0.037px;">Each</div>
<div id="x-p6" class="t" style="left:1257.36px;top:677.6px;letter-spacing:0.190px;">$0.00</div>
<div id="x-pt6" class="t" style="left:1329.42px;top:677.6px;letter-spacing:0.520px;">Grid</div>
<div id="x-pd6" class="t lk" style="left:1436.62px;top:677.6px;letter-spacing:0.171px;">Direct to Garment</div>
<div id="x-n7" class="t lk" style="left:79.38px;top:744.6px;letter-spacing:0.195px;">T-Shirt - Screen Printing</div>
<div id="x-a7" class="t" style="left:350.84px;top:744.6px;letter-spacing:0.277px;">Apparel</div>
<div id="x-c7" class="t" style="left:430.22px;top:744.6px;letter-spacing:0.129px;">Screen Printing</div>
<div id="x-d7_0" class="t" style="left:685.67px;top:744.6px;letter-spacing:0.181px;">Screen printed apparel per approved proof</div>
<div id="x-co7" class="t" style="left:1053.25px;top:744.6px;letter-spacing:0.088px;">$0.00</div>
<div id="x-m7" class="t" style="left:1125.34px;top:744.6px;letter-spacing:0.509px;">1.0×</div>
<div id="x-u7" class="t" style="left:1198.55px;top:744.6px;letter-spacing:0.043px;">Each</div>
<div id="x-p7" class="t" style="left:1257.36px;top:744.6px;letter-spacing:0.208px;">$0.00</div>
<div id="x-pt7" class="t" style="left:1329.04px;top:744.6px;letter-spacing:0.569px;">Grid</div>
<div id="x-pd7" class="t lk" style="left:1436.67px;top:744.6px;letter-spacing:0.237px;"><span>Screen printing - 1st Location Apparel</span> - Screen Printing</div>
<div class="a" id="sb"></div>
</div>
<div class="a" id="foot"></div><svg style="left:7px;top:953.5px" width="6" height="7" viewBox="0 0 6 7"><path d="M0 0C0.500 3.500 2.500 6 6 6.200V7H0z" fill="#2a4173"/></svg><svg style="left:1761.5px;top:956.5px" width="6" height="4" viewBox="0 0 6 4"><path d="M6 0C5 2 3 3.200 0 3.200V4h6z" fill="#6d778b"/></svg>
<div class="a" id="bl"></div><div class="a" id="bt"></div><div class="a" id="br"></div><div class="a" id="bb"></div>
</body>
</html>
